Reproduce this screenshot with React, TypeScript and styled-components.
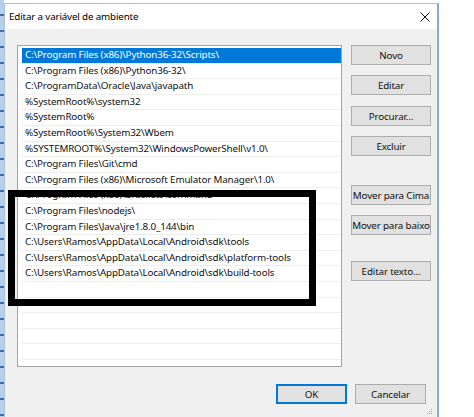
import React from 'react';
import styled, { createGlobalStyle } from 'styled-components';

const GlobalStyle = createGlobalStyle`
  body {
    margin: 0;
    background: #ffffff;
    font-family: 'Noto Sans', 'Open Sans', sans-serif;
  }
`;

const Page = styled.div`
  position: relative;
  width: 474px;
  height: 417px;
  overflow: hidden;
  display: flex;
  align-items: flex-start;
  background: #ffffff;
`;

const BackStrip = styled.div`
  width: 4px;
  height: 100%;
  flex: none;
  background: repeating-linear-gradient(
    180deg,
    #b7d0ea 0px,
    #b7d0ea 14px,
    #3f6fa8 14px,
    #3f6fa8 16px
  );
`;

const Dialog = styled.div`
  width: 432px;
  height: 440px;
  margin-top: 3px;
  flex: none;
  display: flex;
  flex-direction: column;
  border: 1px solid #a9bfd8;
  border-right: 2px solid #86aad3;
  background: #f0f0f0;
`;

const TitleBar = styled.div`
  height: 25px;
  flex: none;
  display: flex;
  align-items: center;
  justify-content: space-between;
  padding: 0 7px 0 4px;
  background: #ffffff;
  font-size: 9.8px;
  letter-spacing: -0.15px;
  color: #000000;
`;

const Body = styled.div`
  flex: 1;
  display: flex;
  flex-direction: column;
  padding: 16px 0 0 12px;
`;

const Main = styled.div`
  display: flex;
  gap: 9px;
`;

const ListBox = styled.div`
  width: 325px;
  height: 322px;
  box-sizing: border-box;
  flex: none;
  background: #ffffff;
  border: 1px solid #a3a3a3;
  padding: 2px 0 0 4px;
  overflow: hidden;
`;

const Row = styled.div<{ $selected?: boolean }>`
  height: 15.6px;
  box-sizing: border-box;
  padding-left: 3px;
  font-size: 9.8px;
  letter-spacing: -0.15px;
  line-height: 14px;
  white-space: nowrap;
  border-bottom: 1px solid #eeeeee;
  background: ${(p) => (p.$selected ? '#0078d7' : 'transparent')};
  color: ${(p) => (p.$selected ? '#ffffff' : '#111111')};
`;

const ButtonColumn = styled.div`
  display: flex;
  flex-direction: column;
`;

const Button = styled.div<{ $gap?: number; $width?: number; $primary?: boolean }>`
  width: ${(p) => p.$width ?? 80}px;
  height: 20px;
  box-sizing: border-box;
  margin-top: ${(p) => p.$gap ?? 0}px;
  display: flex;
  align-items: center;
  justify-content: center;
  background: #e1e1e1;
  border: 1px solid ${(p) => (p.$primary ? '#0078d7' : '#adadad')};
  box-shadow: ${(p) => (p.$primary ? 'inset 0 0 0 1px #0078d7' : 'none')};
  font-size: 9.8px;
  letter-spacing: -0.15px;
  color: #111111;
  white-space: nowrap;
`;

const Footer = styled.div`
  display: flex;
  justify-content: flex-end;
  gap: 8px;
  padding: 17px 11px 0 0;
`;

const Annotation = styled.div`
  position: absolute;
  left: 8px;
  top: 190px;
  width: 308px;
  height: 116px;
  box-sizing: border-box;
  border: 7px solid #000000;
  pointer-events: none;
`;

const Grip = styled.svg`
  position: absolute;
  left: 427px;
  top: 409px;
`;

const paths = [
  'C:\\Program Files (x86)\\Python36-32\\Scripts\\',
  'C:\\Program Files (x86)\\Python36-32\\',
  'C:\\ProgramData\\Oracle\\Java\\javapath',
  '%SystemRoot%\\system32',
  '%SystemRoot%',
  '%SystemRoot%\\System32\\Wbem',
  '%SYSTEMROOT%\\System32\\WindowsPowerShell\\v1.0\\',
  'C:\\Program Files\\Git\\cmd',
  'C:\\Program Files (x86)\\Microsoft Emulator Manager\\1.0\\',
  'C:\\Program Files (x86)\\brackets\\command',
  'C:\\Program Files\\nodejs\\',
  'C:\\Program Files\\Java\\jre1.8.0_144\\bin',
  'C:\\Users\\Ramos\\AppData\\Local\\Android\\sdk\\tools',
  'C:\\Users\\Ramos\\AppData\\Local\\Android\\sdk\\platform-tools',
  'C:\\Users\\Ramos\\AppData\\Local\\Android\\sdk\\build-tools',
  '',
  '',
  '',
  '',
  '',
];

const App = () => {
  return (
    <Page>
      <GlobalStyle />
      <BackStrip />
      <Dialog>
        <TitleBar>
          <span>Editar a variável de ambiente</span>
          <svg width="10" height="10" viewBox="0 0 10 10">
            <path d="M0.5 0.5 L9.5 9.5 M9.5 0.5 L0.5 9.5" stroke="#111" strokeWidth="1" />
          </svg>
        </TitleBar>
        <Body>
          <Main>
            <ListBox>
              {paths.map((p, i) => (
                <Row key={i} $selected={i === 0}>
                  {p}
                </Row>
              ))}
            </ListBox>
            <ButtonColumn>
              <Button>Novo</Button>
              <Button $gap={10}>Editar</Button>
              <Button $gap={11}>Procurar...</Button>
              <Button $gap={10}>Excluir</Button>
              <Button $gap={29}>Mover para Cima</Button>
              <Button $gap={10}>Mover para baixo</Button>
              <Button $gap={26}>Editar texto...</Button>
            </ButtonColumn>
          </Main>
          <Footer>
            <Button $width={71} $primary>
              OK
            </Button>
            <Button $width={71}>Cancelar</Button>
          </Footer>
        </Body>
      </Dialog>
      <Annotation />
      <Grip width="6" height="6" viewBox="0 0 6 6">
        <rect x="4" y="0" width="1" height="1" fill="#a0a0a0" />
        <rect x="2" y="2" width="1" height="1" fill="#a0a0a0" />
        <rect x="4" y="2" width="1" height="1" fill="#a0a0a0" />
        <rect x="0" y="4" width="1" height="1" fill="#a0a0a0" />
        <rect x="2" y="4" width="1" height="1" fill="#a0a0a0" />
        <rect x="4" y="4" width="1" height="1" fill="#a0a0a0" />
      </Grip>
    </Page>
  );
};

export default App;
